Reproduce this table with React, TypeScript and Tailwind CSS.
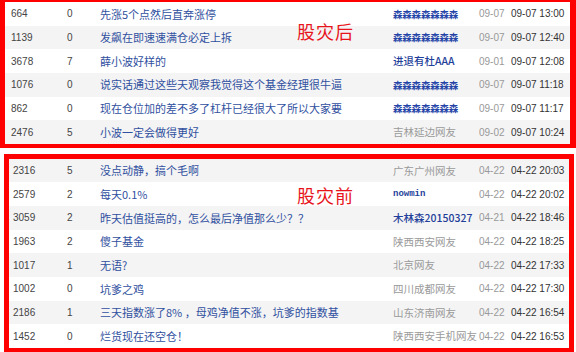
type Post = {
  views: string;
  replies: string;
  title: string;
  author: string;
  authorTone: "blue" | "gray" | "bold" | "tiny";
  posted: string;
  updated: string;
};

const AFTER: Post[] = [
  { views: "664", replies: "0", title: "先涨5个点然后直奔涨停", author: "森森森森森森森", authorTone: "bold", posted: "09-07", updated: "09-07 13:00" },
  { views: "1139", replies: "0", title: "发飙在即速速满仓必定上拆", author: "森森森森森森森", authorTone: "bold", posted: "09-07", updated: "09-07 12:40" },
  { views: "3678", replies: "7", title: "薛小波好样的", author: "进退有杜AAA", authorTone: "blue", posted: "09-01", updated: "09-07 12:08" },
  { views: "1076", replies: "0", title: "说实话通过这些天观察我觉得这个基金经理很牛逼", author: "森森森森森森森", authorTone: "bold", posted: "09-07", updated: "09-07 11:18" },
  { views: "862", replies: "0", title: "现在仓位加的差不多了杠杆已经很大了所以大家要", author: "森森森森森森森", authorTone: "bold", posted: "09-07", updated: "09-07 11:17" },
  { views: "2476", replies: "5", title: "小波一定会做得更好", author: "吉林延边网友", authorTone: "gray", posted: "09-02", updated: "09-07 10:24" },
];

const BEFORE: Post[] = [
  { views: "2316", replies: "5", title: "没点动静，搞个毛啊", author: "广东广州网友", authorTone: "gray", posted: "04-22", updated: "04-22 20:03" },
  { views: "2579", replies: "2", title: "每天0.1%", author: "nowmin", authorTone: "tiny", posted: "04-22", updated: "04-22 20:02" },
  { views: "3059", replies: "2", title: "昨天估值挺高的，怎么最后净值那么少？？", author: "木林森20150327", authorTone: "blue", posted: "04-21", updated: "04-22 18:46" },
  { views: "1963", replies: "2", title: "傻子基金", author: "陕西西安网友", authorTone: "gray", posted: "04-22", updated: "04-22 18:25" },
  { views: "1017", replies: "1", title: "无语?", author: "北京网友", authorTone: "gray", posted: "04-22", updated: "04-22 17:33" },
  { views: "1002", replies: "0", title: "坑爹之鸡", author: "四川成都网友", authorTone: "gray", posted: "04-22", updated: "04-22 17:30" },
  { views: "2186", replies: "1", title: "三天指数涨了8% ，母鸡净值不涨，坑爹的指数基", author: "山东济南网友", authorTone: "gray", posted: "04-22", updated: "04-22 16:54" },
  { views: "1452", replies: "0", title: "烂货现在还空仓！", author: "陕西西安手机网友", authorTone: "gray", posted: "04-22", updated: "04-22 16:53" },
];

const authorClass = {
  blue: "text-[10.5px] text-[#1f3f9a] font-medium",
  gray: "text-[10.5px] text-[#9a9a9a]",
  bold: "text-[9.5px] text-[#2544a8] font-bold tracking-[-0.2px]",
  tiny: "text-[9px] text-[#1f3f9a] font-bold font-['Liberation_Mono',monospace]",
};

function Row({ post, shaded, cols }: { post: Post; shaded: boolean; cols: string }) {
  return (
    <div className={`grid ${cols} items-center h-[23.65px] ${shaded ? "bg-[#f4f4f4]" : "bg-white"}`}>
      <span className="text-[10px] text-[#444] font-['Liberation_Sans',sans-serif]">{post.views}</span>
      <span className="text-[10px] text-[#444] font-['Liberation_Sans',sans-serif]">{post.replies}</span>
      <span className="text-[11px] text-[#3050a0] whitespace-nowrap overflow-hidden">{post.title}</span>
      <span className={`${authorClass[post.authorTone]} whitespace-nowrap overflow-hidden`}>{post.author}</span>
      <span className="text-[10px] text-[#999] font-['Liberation_Sans',sans-serif]">{post.posted}</span>
      <span className="text-[10px] text-[#333] font-['Liberation_Sans',sans-serif] whitespace-pre">
        {post.updated}
      </span>
    </div>
  );
}

export default function App() {
  return (
    <div className="w-[576px] h-[352px] bg-white overflow-hidden font-['Noto_Sans_CJK_SC',sans-serif]">
      {/* ── after the crash ── */}
      <div className="relative w-[576px] border-[#ff0000] border-t-2 border-l-[5px] border-r-[6px] border-b-4">
        {AFTER.map((p, i) => (
          <Row key={p.views} post={p} shaded={i % 2 === 1} cols="grid-cols-[56px_33px_293px_86px_32px_1fr] pl-[6px]" />
        ))}
        <span className="absolute left-[292px] top-[20px] text-[18px] leading-none tracking-[1px] text-[#e8141c]">
          股灾后
        </span>
      </div>

      {/* ── before the crash ── */}
      <div className="relative mt-[6px] ml-[4px] w-[570px] border-[#ff0000] border-t-[5px] border-l-[5px] border-r-[5px] border-b-4">
        {BEFORE.map((p, i) => (
          <Row key={p.views} post={p} shaded={i % 2 === 0} cols="grid-cols-[54px_33px_293px_86px_32px_1fr] pl-[4px]" />
        ))}
        <span className="absolute left-[288px] top-[27px] text-[18px] leading-none tracking-[1px] text-[#e8141c]">
          股灾前
        </span>
      </div>
    </div>
  );
}
